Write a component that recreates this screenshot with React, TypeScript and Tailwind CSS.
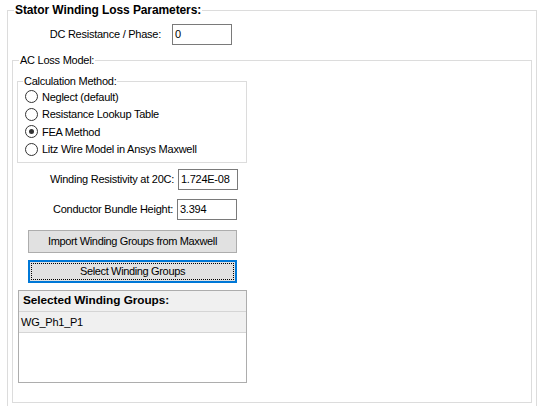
import React from 'react';

// WinForms-style radio option
function Radio({ label, checked }: { label: string; checked?: boolean }) {
  return (
    <div className="flex h-[17.5px] items-center">
      <span className="ml-[7px] flex h-[13px] w-[13px] items-center justify-center rounded-full border border-[#333333] bg-white">
        {checked && <span className="h-[5px] w-[5px] rounded-full bg-[#333333]" />}
      </span>
      <span className="ml-[4px]">{label}</span>
    </div>
  );
}

function Field({ label, value, labelWidth, gap }: { label: string; value: string; labelWidth: string; gap: string }) {
  return (
    <div className="flex items-center">
      <span className={`${labelWidth} text-right`}>{label}</span>
      <div className={`${gap} flex h-[21px] w-[60px] items-center border border-[#7a7a7a] bg-white pl-[2px]`}>{value}</div>
    </div>
  );
}

const groups = ['WG_Ph1_P1'];

export default function App() {
  return (
    <div className="relative h-[406px] w-[541px] overflow-hidden bg-white pl-[7px] pt-[3px] font-['Liberation_Sans',Arial,sans-serif] text-[11px] tracking-[-0.25px] text-black">
      <fieldset className="h-[420px] w-[530px] min-w-0 border border-[#dcdcdc]">
        <legend className="ml-[6px] px-[1px] text-[12px] font-bold leading-[14px] tracking-[-0.1px]">Stator Winding Loss Parameters:</legend>

        <div className="mt-[7px]">
          <Field label="DC Resistance / Phase:" value="0" labelWidth="w-[153px]" gap="ml-[11px]" />
        </div>

        <fieldset className="ml-[4px] mr-[4px] mt-[8px] h-[350px] min-w-0 border border-[#dcdcdc]">
          <legend className="ml-[6px] px-[1px] leading-[14px]">AC Loss Model:</legend>

          <fieldset className="ml-[4px] mt-[7px] h-[89px] w-[230px] min-w-0 border border-[#dcdcdc]">
            <legend className="ml-[5px] px-[1px] leading-[14px]">Calculation Method:</legend>
            <Radio label="Neglect (default)" />
            <Radio label="Resistance Lookup Table" />
            <Radio label="FEA Method" checked />
            <Radio label="Litz Wire Model in Ansys Maxwell" />
          </fieldset>

          <div className="mt-[6px]">
            <Field label="Winding Resistivity at 20C:" value="1.724E-08" labelWidth="w-[161px]" gap="ml-[4px]" />
          </div>
          <div className="mt-[9px]">
            <Field label="Conductor Bundle Height:" value="3.394" labelWidth="w-[160px]" gap="ml-[4px]" />
          </div>

          <button className="ml-[15px] mt-[10px] block h-[23px] w-[209px] border border-[#adadad] bg-[#e1e1e1] text-center tracking-[-0.35px]">
            Import Winding Groups from Maxwell
          </button>
          <button className="ml-[15px] mt-[7px] block h-[23px] w-[209px] border-2 border-[#0078d7] bg-[#e1e1e1] text-center tracking-[-0.35px] outline-1 outline-offset-[-4px] outline-dotted outline-black">
            Select Winding Groups
          </button>

          <div className="ml-[5px] mt-[7px] h-[93px] w-[229px] border border-[#adadad] bg-white">
            <div className="flex h-[21px] items-center border-b border-[#d5d5d5] bg-[#f0f0f0] pl-[4px] text-[11.8px] font-bold tracking-[-0.05px]">
              Selected Winding Groups:
            </div>
            {groups.map((g) => (
              <div key={g} className="flex h-[21px] items-center border-b border-[#d5d5d5] bg-[#f0f0f0] pl-[2px]">
                {g}
              </div>
            ))}
          </div>
        </fieldset>
      </fieldset>
    </div>
  );
}
